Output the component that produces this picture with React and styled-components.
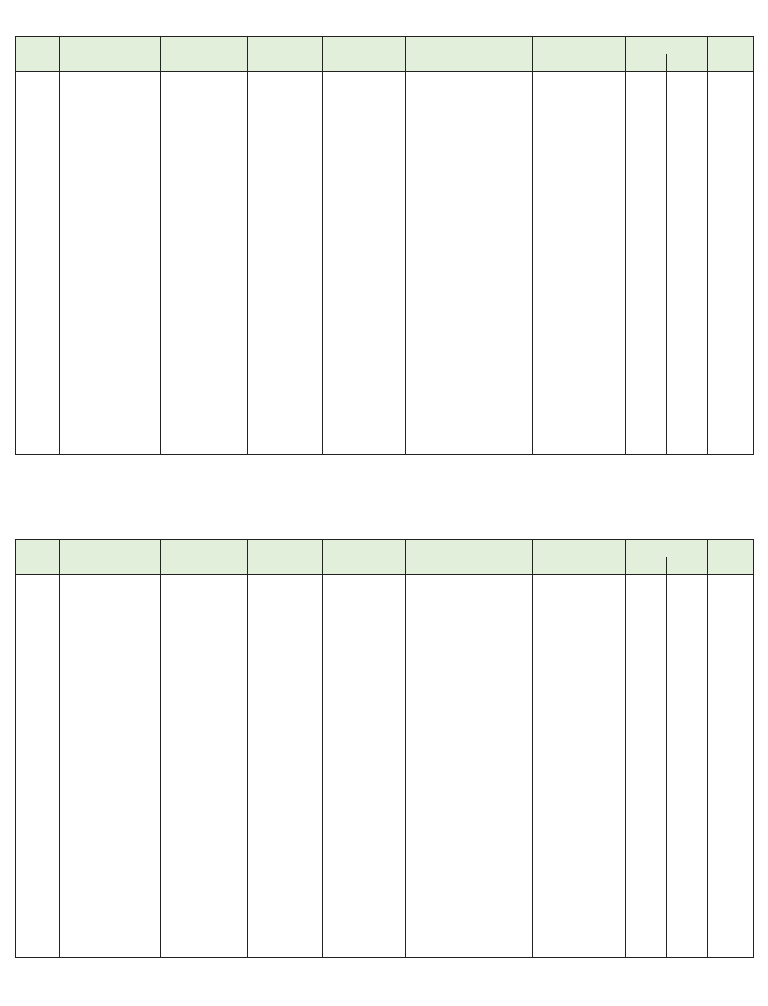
import React from 'react';
import styled, { createGlobalStyle } from 'styled-components';

const GlobalStyle = createGlobalStyle`
  * { box-sizing: border-box; }
  body {
    margin: 0;
    background: #fff;
    font-family: 'Liberation Sans', Arial, sans-serif;
  }
`;

const Page = styled.div`
  display: flex;
  flex-direction: column;
  gap: 84px;
  padding: 36px 0 0 15px;
`;

// column widths include each cell's right border
const widths = [44, 101, 87, 75, 83, 127, 93, 41, 41, 46];

const Grid = styled.div`
  display: grid;
  grid-template-columns: ${widths.map((w) => `${w}px`).join(' ')};
  grid-template-rows: 17px 18px 383px;
  width: ${widths.reduce((a, b) => a + b, 0) + 1}px;
  border-left: 1px solid #222;
  border-top: 1px solid #222;
`;

const HeadCell = styled.div`
  grid-column: ${(p) => p.$col} / span ${(p) => p.$span || 1};
  grid-row: ${(p) => (p.$group ? '1' : '1 / span 2')};
  background: #e2efda;
  border-right: 1px solid #222;
  border-bottom: ${(p) => (p.$group ? 'none' : '1px solid #222')};
`;

const SubCell = styled.div`
  grid-column: ${(p) => p.$col};
  grid-row: 2;
  background: #e2efda;
  border-right: 1px solid #222;
  border-bottom: 1px solid #222;
`;

const BodyCell = styled.div`
  grid-row: 3;
  border-right: 1px solid #222;
  border-bottom: 1px solid #222;
`;

const Sheet = () => (
  <Grid>
    {[1, 2, 3, 4, 5, 6, 7].map((c) => (
      <HeadCell key={c} $col={c} />
    ))}
    <HeadCell $col={8} $span={2} $group />
    <HeadCell $col={10} />
    <SubCell $col={8} />
    <SubCell $col={9} />
    {widths.map((_, i) => (
      <BodyCell key={i} />
    ))}
  </Grid>
);

const App = () => (
  <>
    <GlobalStyle />
    <Page>
      <Sheet />
      <Sheet />
    </Page>
  </>
);

export default App;
